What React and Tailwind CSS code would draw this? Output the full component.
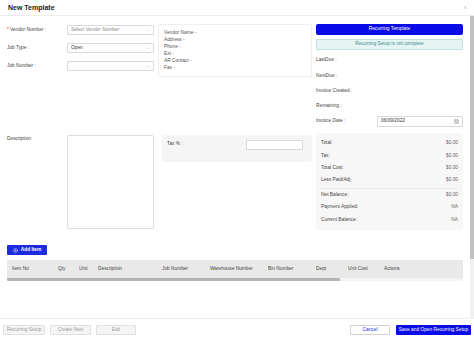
import React from 'react'
import { ChevronDown, CalendarDays, CirclePlus, X } from 'lucide-react'

const font = "font-['Liberation_Sans',Arial,sans-serif]"

const Select = ({ value = '', placeholder = '' }) => (
  <div className="w-[87px] h-[10px] border border-[#d9d9d9] rounded-[1px] bg-white flex items-center justify-between px-[3px]">
    <span className={value ? 'text-[#333]' : 'text-[#888]'}>{value || placeholder}</span>
    <ChevronDown className="w-[5px] h-[5px] text-[#aaa]" strokeWidth={2} />
  </div>
)

const FieldRow = ({ label, required, children }) => (
  <div className="flex items-center h-[10px]">
    <div className="w-[60px] text-[#444]">
      {required && <span className="text-[#e0201a] mr-[1px]">*</span>}
      {label}
    </div>
    {children}
  </div>
)

const InfoRow = ({ label, children }) => (
  <div className="h-[15.3px] flex items-center justify-between text-[#444]">
    <span>{label}</span>
    {children}
  </div>
)

const TotalRow = ({ label, value }) => (
  <div className="h-[12.4px] flex items-center justify-between text-[#444]">
    <span>{label}</span>
    <span className="text-[#666]">{value}</span>
  </div>
)

const columns = [
  ['Item No', 46],
  ['Qty', 21],
  ['Unit', 19],
  ['Description', 64],
  ['Job Number', 48],
  ['Warehouse Number', 58],
  ['Bin Number', 48],
  ['Dept', 32],
  ['Unit Cost', 36],
  ['Actions', 40],
]

export default function App() {
  return (
    <div className={`w-[474px] h-[338px] overflow-hidden bg-white flex flex-col text-[4.8px] leading-none ${font}`}>
      {/* header */}
      <div className="h-[16px] shrink-0 flex items-center justify-between pl-[8px] pr-[6px] border-b border-[#eeeeee]">
        <span className="text-[7px] font-bold text-[#222]">New Template</span>
        <X className="w-[5px] h-[5px] text-[#999]" strokeWidth={2} />
      </div>

      {/* body */}
      <div className="flex-1 flex min-h-0">
        <div className="w-[470px] pl-[7px] pr-[7px] pt-[8px]">
          <div className="flex">
            {/* left area */}
            <div className="w-[305px]">
              <div className="flex">
                <div className="w-[147px] flex flex-col gap-[8px] pt-[1px]">
                  <FieldRow label="Vendor Number :" required>
                    <Select placeholder="Select Vendor Number" />
                  </FieldRow>
                  <FieldRow label="Job Type :">
                    <Select value="Open" />
                  </FieldRow>
                  <FieldRow label="Job Number :">
                    <Select />
                  </FieldRow>
                </div>
                <div className="ml-[4px] w-[154px] h-[53px] border border-[#eeeeee] rounded-[2px] pl-[5px] pt-[6px] flex flex-col gap-[2.2px] text-[#555]">
                  <span>Vendor Name -</span>
                  <span>Address -</span>
                  <span>Phone -</span>
                  <span>Ext -</span>
                  <span>AR Contact -</span>
                  <span>Fax -</span>
                </div>
              </div>

              <div className="flex mt-[58px]">
                <div className="w-[60px] pt-[2px] text-[#444]">Description:</div>
                <div className="w-[87px] h-[94px] border border-[#dddddd] rounded-[2px] bg-white" />
                <div className="ml-[8px] w-[150px] h-[27px] bg-[#f5f5f5] rounded-[2px] flex items-start justify-between pl-[5px] pr-[9px] pt-[5px]">
                  <span className="text-[#444] mt-[2px]">Tax % :</span>
                  <div className="w-[57px] h-[10px] bg-white border border-[#d9d9d9] rounded-[1px]" />
                </div>
              </div>
            </div>

            {/* right area */}
            <div className="ml-[4px] w-[147px]">
              <div className="h-[11px] bg-[#0b0be8] rounded-[2px] text-white flex items-center justify-center">
                Recurring Template
              </div>
              <div className="mt-[4px] h-[11px] bg-[#e6f4f4] border border-[#bfe0df] rounded-[1px] text-[#3f8c8a] flex items-center justify-center">
                Recurring Setup is not complete
              </div>
              <div className="mt-[3px]">
                <InfoRow label="LastDue :" />
                <InfoRow label="NextDue :" />
                <InfoRow label="Invoice Created :" />
                <InfoRow label="Remaining :" />
                <InfoRow label="Invoice Date :">
                  <div className="w-[86px] h-[11px] border border-[#d9d9d9] rounded-[1px] flex items-center justify-between px-[3px] text-[#333]">
                    <span>06/09/2022</span>
                    <CalendarDays className="w-[5px] h-[5px] text-[#888]" strokeWidth={2} />
                  </div>
                </InfoRow>
              </div>
              <div className="mt-[4px] h-[97px] bg-[#f7f7f7] rounded-[2px] px-[5px] pt-[4px]">
                <TotalRow label="Total:" value="$0.00" />
                <TotalRow label="Tax:" value="$0.00" />
                <TotalRow label="Total Cost:" value="$0.00" />
                <TotalRow label="Less Paid/Adj:" value="$0.00" />
                <div className="border-t border-[#ececec] mt-[1px]" />
                <TotalRow label="Net Balance:" value="$0.00" />
                <TotalRow label="Payment Applied:" value="NA" />
                <TotalRow label="Current Balance:" value="NA" />
              </div>
            </div>
          </div>

          {/* items */}
          <button className="mt-[15px] w-[40px] h-[10px] bg-[#1c2be0] rounded-[1px] text-white flex items-center justify-center gap-[3px]">
            <CirclePlus className="w-[5px] h-[5px]" strokeWidth={2} />
            <span className="font-bold">Add Item</span>
          </button>
          <div className="mt-[5px] w-[456px]">
            <div className="h-[18px] bg-[#e9e9e9] flex items-center pl-[5px] text-[#444]">
              {columns.map(([name, w]) => (
                <div key={name} style={{ width: w }} className="shrink-0">{name}</div>
              ))}
            </div>
            <div className="h-[3px] flex">
              <div className="w-[333px] bg-[#b3b3b3] rounded-[1px]" />
              <div className="flex-1 bg-[#f3f3f3]" />
            </div>
          </div>
        </div>

        {/* vertical scrollbar */}
        <div className="w-[4px] bg-[#f1f1f1] flex flex-col">
          <div className="h-[243px] bg-[#c1c1c1]" />
        </div>
      </div>

      {/* footer */}
      <div className="h-[20px] shrink-0 border-t border-[#eeeeee] flex items-center justify-between pl-[3px] pr-[3px] pt-[5px] pb-[2px]">
        <div className="flex gap-[5px] text-[#9a9a9a]">
          <div className="w-[42px] h-[10px] bg-[#f4f4f4] border border-[#e0e0e0] rounded-[1px] flex items-center justify-center">Recurring Setup</div>
          <div className="w-[41px] h-[10px] bg-[#f4f4f4] border border-[#e0e0e0] rounded-[1px] flex items-center justify-center">Create Next</div>
          <div className="w-[40px] h-[10px] bg-[#f4f4f4] border border-[#e0e0e0] rounded-[1px] flex items-center justify-center">Edit</div>
        </div>
        <div className="flex gap-[6px]">
          <div className="w-[40px] h-[10px] bg-white border border-[#d0d0d0] rounded-[1px] flex items-center justify-center text-[#1c2be0]">Cancel</div>
          <div className="w-[75px] h-[10px] bg-[#0b0be8] rounded-[1px] flex items-center justify-center text-white">Save and Open Recurring Setup</div>
        </div>
      </div>
    </div>
  )
}
